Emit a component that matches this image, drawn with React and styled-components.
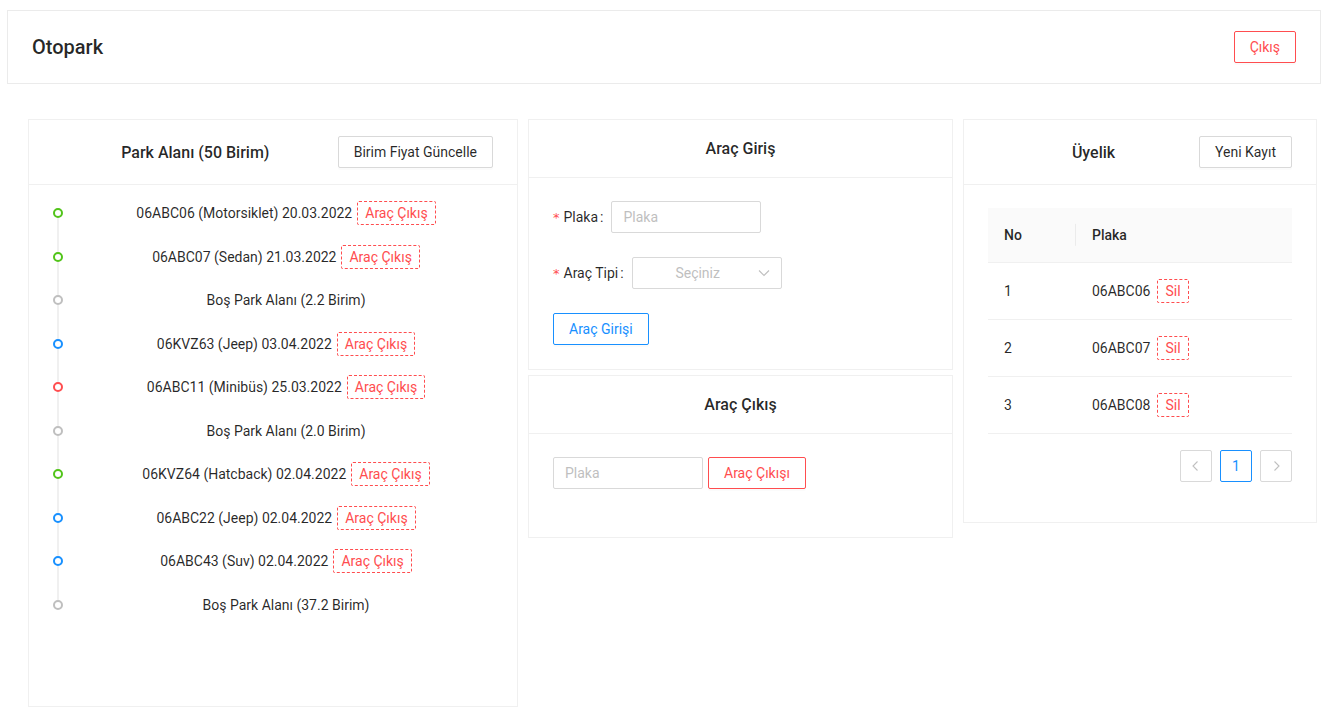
import React from "react";
import styled, { createGlobalStyle } from "styled-components";

const GlobalStyle = createGlobalStyle`
  * {
    box-sizing: border-box;
  }
  body {
    margin: 0;
    background: #fff;
    font-family: Roboto, "Liberation Sans", Arial, sans-serif;
    font-size: 14px;
    color: rgba(0, 0, 0, 0.85);
  }
`;

const RED = "#ff4d4f";
const BLUE = "#1890ff";

const Page = styled.div`
  padding: 10px 8px 0 7px;
`;

const Header = styled.header`
  display: flex;
  align-items: center;
  justify-content: space-between;
  height: 74px;
  padding: 0 24px;
  border: 1px solid #ebebeb;
`;

const PageTitle = styled.h1`
  margin: 0;
  font-size: 20px;
  font-weight: 500;
  color: rgba(0, 0, 0, 0.85);
`;

const Button = styled.button`
  height: 32px;
  padding: 4px 15px;
  border: 1px solid
    ${(p) => (p.$tone === "danger" ? RED : p.$tone === "primary" ? BLUE : "#d9d9d9")};
  border-radius: 2px;
  background: #fff;
  color: ${(p) =>
    p.$tone === "danger" ? RED : p.$tone === "primary" ? BLUE : "rgba(0, 0, 0, 0.85)"};
  font-family: inherit;
  font-size: 14px;
  line-height: 22px;
  cursor: pointer;
  white-space: nowrap;
  box-shadow: 0 2px 0 rgba(0, 0, 0, 0.015);
`;

const DashedButton = styled.button`
  height: 24px;
  padding: 0 7px;
  border: 1px dashed ${RED};
  border-radius: 2px;
  background: #fff;
  color: ${RED};
  font-family: inherit;
  font-size: 14px;
  line-height: 22px;
  cursor: pointer;
  white-space: nowrap;
`;

const Columns = styled.main`
  display: flex;
  align-items: flex-start;
  gap: 10px;
  margin: 35px 0 0 21px;
`;

const Stack = styled.div`
  display: flex;
  flex-direction: column;
  gap: 5px;
`;

const Card = styled.section`
  width: ${(p) => p.$width}px;
  height: ${(p) => (p.$height ? `${p.$height}px` : "auto")};
  border: 1px solid #f0f0f0;
  background: #fff;
`;

const CardHead = styled.div`
  display: flex;
  align-items: center;
  padding: 0 24px;
  border-bottom: 1px solid #f0f0f0;
`;

const CardTitle = styled.div`
  flex: 1;
  padding: 16px 0;
  text-align: center;
  font-size: 16px;
  font-weight: 500;
  line-height: 25px;
`;

const CardExtra = styled.div`
  padding: 16px 0;
  display: flex;
`;

const CardBody = styled.div`
  padding: ${(p) => p.$padding || "23px 24px 24px"};
`;

/* Timeline */
const Timeline = styled.ul`
  list-style: none;
  margin: 0;
  padding: 0;
`;

const TimelineItem = styled.li`
  position: relative;
  display: flex;
  align-items: flex-start;
  height: 43.5px;

  &:not(:last-child)::after {
    content: "";
    position: absolute;
    left: 4px;
    top: 17px;
    width: 2px;
    height: 33.5px;
    background: #f0f0f0;
  }
`;

const Dot = styled.span`
  flex: none;
  width: 10px;
  height: 10px;
  margin-top: 7px;
  border: 2px solid ${(p) => p.$color};
  border-radius: 50%;
  background: #fff;
`;

const TimelineContent = styled.div`
  flex: 1;
  margin-left: 16px;
  display: flex;
  align-items: center;
  justify-content: center;
  gap: 5px;
  height: 24px;
  line-height: 22px;
`;

/* Form */
const FormItem = styled.div`
  display: flex;
  align-items: center;
  margin-bottom: ${(p) => (p.$last ? "0" : "24px")};
  gap: ${(p) => p.$gap || "0"};
`;

const Label = styled.label`
  display: flex;
  align-items: center;
  white-space: nowrap;

  &::after {
    content: ":";
    margin: 0 8px 0 2px;
  }
`;

const Required = styled.span`
  color: ${RED};
  margin-right: 4px;
  font-family: "DejaVu Sans", sans-serif;
  font-size: 13px;
`;

const Input = styled.input`
  width: 150px;
  height: 32px;
  padding: 4px 11px;
  border: 1px solid #d9d9d9;
  border-radius: 2px;
  font-family: inherit;
  font-size: 14px;
  color: rgba(0, 0, 0, 0.85);
  outline: none;

  &::placeholder {
    color: #bfbfbf;
  }
`;

const Select = styled.div`
  width: 150px;
  height: 32px;
  display: flex;
  align-items: center;
  padding: 0 11px;
  border: 1px solid #d9d9d9;
  border-radius: 2px;
  color: #bfbfbf;
`;

const SelectValue = styled.span`
  flex: 1;
  text-align: center;
  padding-right: 6px;
`;

/* Table */
const Table = styled.table`
  width: 100%;
  border-collapse: collapse;
  text-align: left;

  th,
  td {
    padding: 16px;
    border-bottom: 1px solid #f0f0f0;
    line-height: 22px;
  }

  th {
    position: relative;
    background: #fafafa;
    font-weight: 500;
  }

  th:first-child {
    width: 88px;
  }

  th:not(:last-child)::before {
    content: "";
    position: absolute;
    right: 0;
    top: 50%;
    width: 1px;
    height: 1.6em;
    transform: translateY(-50%);
    background: rgba(0, 0, 0, 0.06);
  }
`;

const PlateCell = styled.div`
  display: flex;
  align-items: center;
  gap: 7px;
`;

const Pagination = styled.div`
  display: flex;
  justify-content: flex-end;
  gap: 8px;
  margin: 16px 0;
`;

const PageItem = styled.span`
  width: 32px;
  height: 32px;
  display: flex;
  align-items: center;
  justify-content: center;
  border: 1px solid ${(p) => (p.$active ? BLUE : "#d9d9d9")};
  border-radius: 2px;
  color: ${(p) => (p.$active ? BLUE : "rgba(0, 0, 0, 0.25)")};
  font-size: 14px;
`;

const Chevron = ({ dir }) => {
  const points = {
    left: "7.5,1.5 3,6 7.5,10.5",
    right: "4.5,1.5 9,6 4.5,10.5",
    down: "1,3.5 6,8.5 11,3.5",
  }[dir];
  return (
    <svg width="12" height="12" viewBox="0 0 12 12" fill="none">
      <polyline points={points} stroke="currentColor" strokeWidth="1.1" />
    </svg>
  );
};

const parking = [
  { color: "#52c41a", text: "06ABC06 (Motorsiklet) 20.03.2022", car: true },
  { color: "#52c41a", text: "06ABC07 (Sedan) 21.03.2022", car: true },
  { color: "#bfbfbf", text: "Boş Park Alanı (2.2 Birim)" },
  { color: BLUE, text: "06KVZ63 (Jeep) 03.04.2022", car: true },
  { color: RED, text: "06ABC11 (Minibüs) 25.03.2022", car: true },
  { color: "#bfbfbf", text: "Boş Park Alanı (2.0 Birim)" },
  { color: "#52c41a", text: "06KVZ64 (Hatcback) 02.04.2022", car: true },
  { color: BLUE, text: "06ABC22 (Jeep) 02.04.2022", car: true },
  { color: BLUE, text: "06ABC43 (Suv) 02.04.2022", car: true },
  { color: "#bfbfbf", text: "Boş Park Alanı (37.2 Birim)" },
];

const members = ["06ABC06", "06ABC07", "06ABC08"];

export default function App() {
  return (
    <Page>
      <GlobalStyle />
      <Header>
        <PageTitle>Otopark</PageTitle>
        <Button $tone="danger">Çıkış</Button>
      </Header>

      <Columns>
        <Card $width={490} $height={588}>
          <CardHead>
            <CardTitle>Park Alanı (50 Birim)</CardTitle>
            <CardExtra>
              <Button>Birim Fiyat Güncelle</Button>
            </CardExtra>
          </CardHead>
          <CardBody $padding="16px 24px">
            <Timeline>
              {parking.map((p, i) => (
                <TimelineItem key={i}>
                  <Dot $color={p.color} />
                  <TimelineContent>
                    <span>{p.text}</span>
                    {p.car && <DashedButton>Araç Çıkış</DashedButton>}
                  </TimelineContent>
                </TimelineItem>
              ))}
            </Timeline>
          </CardBody>
        </Card>

        <Stack>
          <Card $width={425}>
            <CardHead>
              <CardTitle>Araç Giriş</CardTitle>
            </CardHead>
            <CardBody>
              <FormItem>
                <Label>
                  <Required>*</Required>Plaka
                </Label>
                <Input placeholder="Plaka" />
              </FormItem>
              <FormItem>
                <Label>
                  <Required>*</Required>Araç Tipi
                </Label>
                <Select>
                  <SelectValue>Seçiniz</SelectValue>
                  <Chevron dir="down" />
                </Select>
              </FormItem>
              <FormItem $last>
                <Button $tone="primary">Araç Girişi</Button>
              </FormItem>
            </CardBody>
          </Card>

          <Card $width={425}>
            <CardHead>
              <CardTitle>Araç Çıkış</CardTitle>
            </CardHead>
            <CardBody>
              <FormItem $gap="5px">
                <Input placeholder="Plaka" />
                <Button $tone="danger">Araç Çıkışı</Button>
              </FormItem>
            </CardBody>
          </Card>
        </Stack>

        <Card $width={354}>
          <CardHead>
            <CardTitle>Üyelik</CardTitle>
            <CardExtra>
              <Button>Yeni Kayıt</Button>
            </CardExtra>
          </CardHead>
          <CardBody>
            <Table>
              <thead>
                <tr>
                  <th>No</th>
                  <th>Plaka</th>
                </tr>
              </thead>
              <tbody>
                {members.map((m, i) => (
                  <tr key={m}>
                    <td>{i + 1}</td>
                    <td>
                      <PlateCell>
                        <span>{m}</span>
                        <DashedButton>Sil</DashedButton>
                      </PlateCell>
                    </td>
                  </tr>
                ))}
              </tbody>
            </Table>
            <Pagination>
              <PageItem>
                <Chevron dir="left" />
              </PageItem>
              <PageItem $active>1</PageItem>
              <PageItem>
                <Chevron dir="right" />
              </PageItem>
            </Pagination>
          </CardBody>
        </Card>
      </Columns>
    </Page>
  );
}
